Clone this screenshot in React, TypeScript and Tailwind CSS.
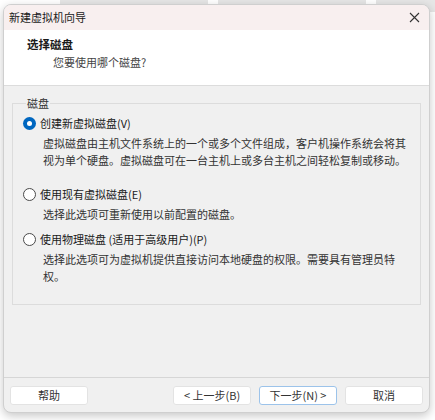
import React from 'react';

const font = { fontFamily: '"Noto Sans CJK SC", "Noto Sans", sans-serif' };

const Radio: React.FC<{ checked?: boolean }> = ({ checked }) =>
  checked ? (
    <span className="w-[13px] h-[13px] rounded-full bg-[#0067c0] flex items-center justify-center shrink-0">
      <span className="w-[5px] h-[5px] rounded-full bg-white"></span>
    </span>
  ) : (
    <span className="w-[13px] h-[13px] rounded-full border border-[#4a4a4a] bg-white shrink-0"></span>
  );

const Btn: React.FC<{ label: string; primary?: boolean }> = ({ label, primary }) => (
  <button
    className={
      primary
        ? 'w-[78px] h-[19px] bg-white border border-[#9cc3ea] rounded-[3px] text-[11px] leading-none text-[#333]'
        : 'w-[78px] h-[19px] bg-white border border-[#e3e3e3] rounded-[3px] text-[11px] leading-none text-[#333]'
    }
  >
    {label}
  </button>
);

export default function App() {
  return (
    <div className="relative w-[435px] h-[420px] bg-white overflow-hidden" style={font}>
      {/* window behind the dialog */}
      <div className="flex h-[12px]">
        <div className="w-[60px]"></div>
        <div className="w-[148px] bg-[#e6e6e6]"></div>
        <div className="w-[10px]"></div>
        <div className="w-[148px] bg-[#e6e6e6]"></div>
        <div className="w-[10px]"></div>
        <div className="flex-1 bg-[#e6e6e6]"></div>
      </div>

      {/* Dialog */}
      <div className="absolute left-[3px] top-[4px] w-[427px] h-[409px] rounded-[8px] border border-[#cfcfcf] bg-[#f0f0f0] overflow-hidden flex flex-col shadow-[0_3px_10px_rgba(0,0,0,0.22)]">
        {/* Title bar */}
        <div className="h-[25px] bg-[#f8efef] flex items-center justify-between pl-[5px] pr-[9px] shrink-0">
          <span className="text-[11px] text-[#1a1a1a]">新建虚拟机向导</span>
          <svg width="11" height="11" viewBox="0 0 11 11" className="text-[#333]">
            <path d="M1 1L10 10M10 1L1 10" stroke="currentColor" strokeWidth="1.1" />
          </svg>
        </div>

        {/* Header */}
        <div className="h-[56px] bg-white border-b border-[#dcdcdc] pt-[6px] pl-[23px] shrink-0">
          <div className="text-[11.5px] leading-[16px] font-bold text-[#1a1a1a]">选择磁盘</div>
          <div className="text-[11px] leading-[16px] text-[#444] pl-[26px] mt-[2px]">您要使用哪个磁盘?</div>
        </div>

        {/* Body */}
        <div className="flex-1 px-[8px]">
          <fieldset className="mt-[9px] h-[210px] border border-[#dcdcdc] pl-[10px]">
            <legend className="ml-[3px] px-[1px] text-[11px] leading-[16px] text-[#333]">磁盘</legend>

            <div className="mt-[4px] flex items-center gap-[4px] h-[16px]">
              <Radio checked />
              <span className="text-[11px] text-[#1a1a1a]">创建新虚拟磁盘(V)</span>
            </div>
            <p className="mt-[4px] ml-[20px] w-[368px] text-[11px] leading-[17px] text-[#333]">
              虚拟磁盘由主机文件系统上的一个或多个文件组成，客户机操作系统会将其视为单个硬盘。虚拟磁盘可在一台主机上或多台主机之间轻松复制或移动。
            </p>

            <div className="mt-[17px] flex items-center gap-[4px] h-[16px]">
              <Radio />
              <span className="text-[11px] text-[#1a1a1a]">使用现有虚拟磁盘(E)</span>
            </div>
            <p className="mt-[4px] ml-[20px] w-[368px] text-[11px] leading-[17px] text-[#333]">
              选择此选项可重新使用以前配置的磁盘。
            </p>

            <div className="mt-[8px] flex items-center gap-[4px] h-[16px]">
              <Radio />
              <span className="text-[11px] text-[#1a1a1a]">使用物理磁盘 (适用于高级用户)(P)</span>
            </div>
            <p className="mt-[4px] ml-[20px] w-[368px] text-[11px] leading-[17px] text-[#333]">
              选择此选项可为虚拟机提供直接访问本地硬盘的权限。需要具有管理员特权。
            </p>
          </fieldset>
        </div>

        {/* Footer */}
        <div className="h-[35px] border-t border-[#d6d6d6] flex items-start pt-[8px] pl-[6px] pr-[6px] shrink-0">
          <Btn label="帮助" />
          <div className="flex-1"></div>
          <div className="flex gap-[8px]">
            <Btn label="< 上一步(B)" />
            <Btn label="下一步(N) >" primary />
            <Btn label="取消" />
          </div>
        </div>
      </div>
    </div>
  );
}
